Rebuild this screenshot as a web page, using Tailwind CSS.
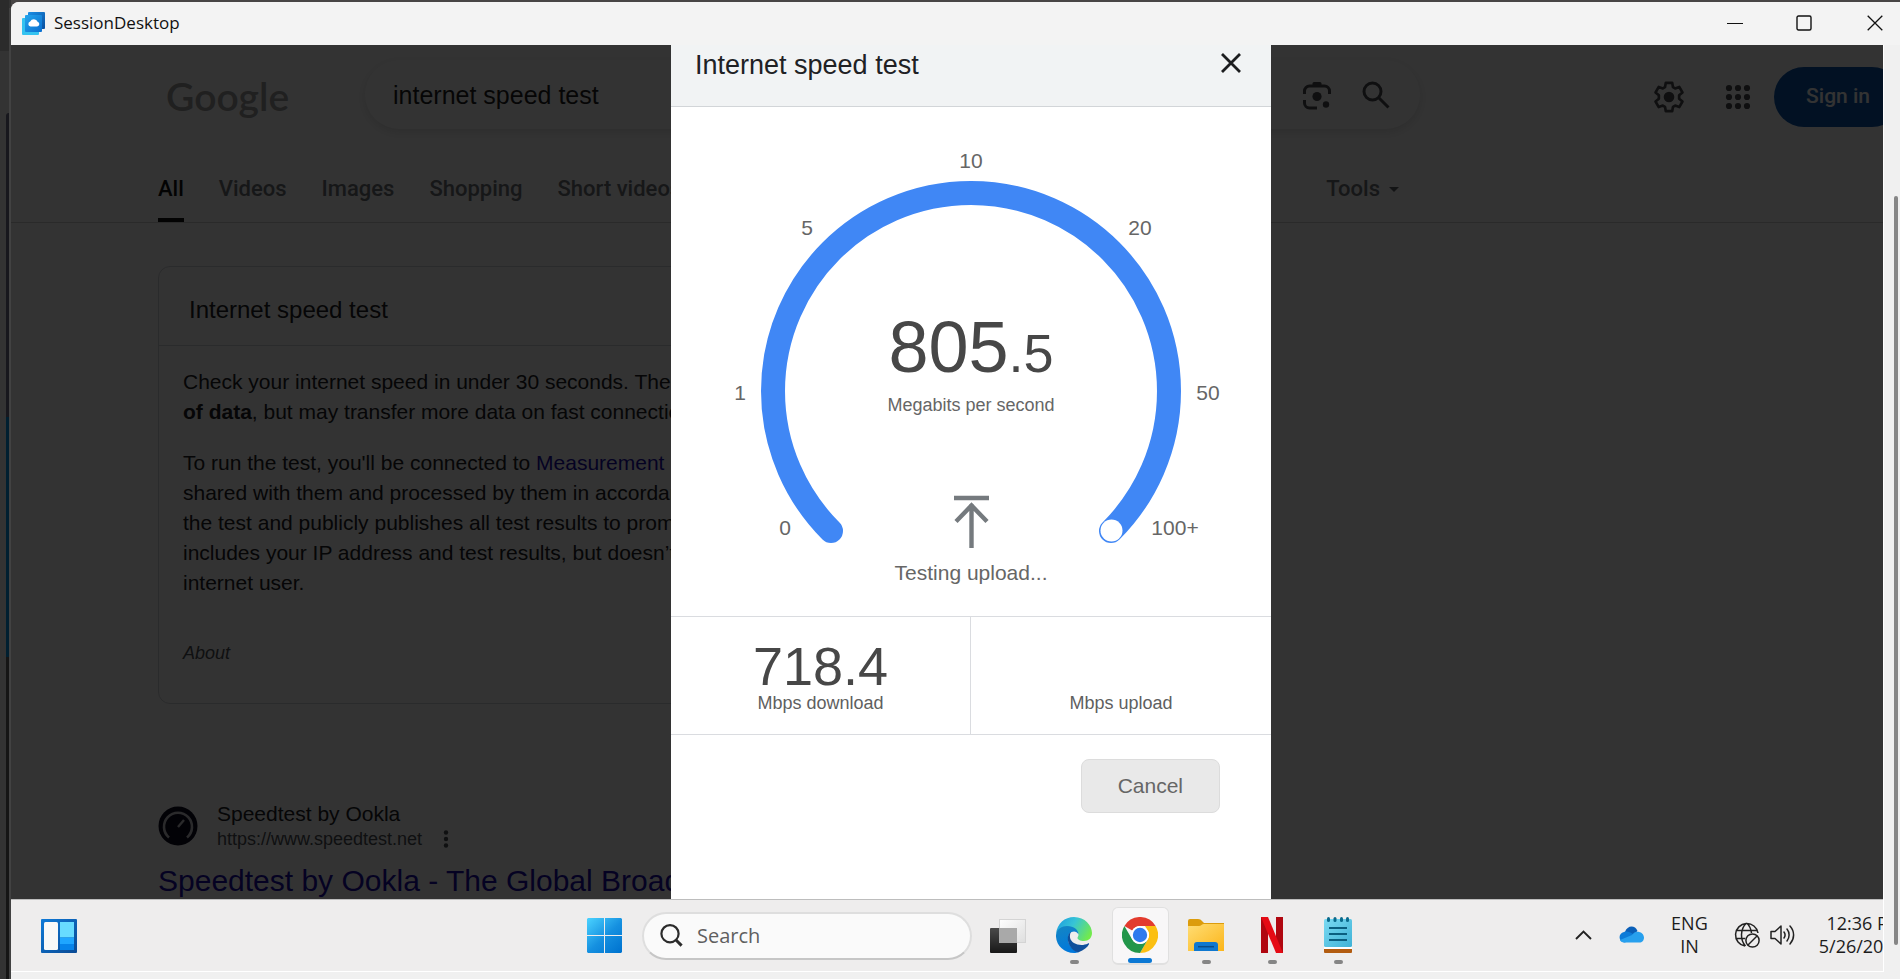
<!DOCTYPE html>
<html lang="en">
<head>
<meta charset="utf-8">
<meta name="viewport" content="width=device-width, initial-scale=1">
<title>SessionDesktop</title>
<script src="https://cdn.jsdelivr.net/npm/@tailwindcss/browser@4"></script>
</head>
<body class="flex h-screen overflow-hidden bg-[#484545] pt-[2px] font-['Liberation_Sans',Arial,sans-serif]">

<!-- Sliver of the windows behind -->
<div class="-mt-[2px] flex w-[11px] shrink-0 bg-[#333]">
  <div class="w-[6px]"><div class="h-[51px] w-[9px] bg-[#2b2b2b]"></div></div>
  <div class="flex w-[3px] flex-col pt-[113px]">
    <div class="h-[304px] rounded-tl bg-[#17171d]"></div>
    <div class="h-[240px] bg-[#001f30]"></div>
    <div class="flex-1 bg-[#151515]"></div>
  </div>
  <div class="mt-2 w-[2px] bg-[#424242]"></div>
</div>

<div class="flex min-w-0 flex-1 flex-col overflow-hidden rounded-tl-lg bg-[#f0f0f0]">

  <!-- Window title bar -->
  <header class="flex h-[43px] shrink-0 items-center bg-[#f3f3f3] pr-[4px] pb-[2px] pl-[11px] font-['Open_Sans','Noto_Sans',sans-serif]">
    <svg class="h-[24px] w-[24px]" viewBox="0 0 24 24" aria-hidden="true">
      <defs>
        <linearGradient id="sd1" x1="0" y1="0" x2="1" y2="1"><stop offset="0" stop-color="#1b8fe6"/><stop offset="1" stop-color="#0a4f9e"/></linearGradient>
        <linearGradient id="sd2" x1="0" y1="0" x2="1" y2="1"><stop offset="0" stop-color="#25a5ec"/><stop offset="1" stop-color="#0a6fd0"/></linearGradient>
      </defs>
      <rect x="6" y="1" width="17" height="17" rx="1" fill="url(#sd1)"/>
      <rect x="0" y="7" width="17" height="17" rx="1" fill="#35c3f0"/>
      <rect x="3" y="4" width="17" height="17" rx="1" fill="url(#sd2)"/>
      <path d="M8.500 15.500h6.600a2.400 2.400 0 0 0 .5-4.700 4 4 0 0 0-7.400-.2 2.500 2.500 0 0 0 .3 4.900z" fill="#fff"/>
    </svg>
    <h1 class="ml-2 text-[17px] leading-6 text-[#111]">SessionDesktop</h1>
    <div class="ml-auto flex h-full">
      <button aria-label="Minimize" class="flex w-[69px] items-center justify-center"><svg class="h-4 w-4" viewBox="0 0 16 16"><path d="M0 8.500h16" stroke="#111"/></svg></button>
      <button aria-label="Maximize" class="flex w-[69px] items-center justify-center"><svg class="h-4 w-4" viewBox="0 0 16 16"><rect x="1" y="1" width="14" height="14" rx="1.500" fill="none" stroke="#111" stroke-width="1.400"/></svg></button>
      <button aria-label="Close" class="flex w-[58px] items-center justify-center pl-4"><svg class="h-4 w-4" viewBox="0 0 16 16"><path d="M.7.7l14.600 14.600M15.300.7L.7 15.300" stroke="#111" stroke-width="1.300"/></svg></button>
    </div>
  </header>

  <div class="flex min-h-0 flex-1">
    <!-- Remote session, wider than its window -->
    <div class="mb-[7px] flex min-w-0 flex-1 flex-col overflow-hidden border-r border-b border-white">
      <main class="relative min-h-0 w-[calc(100%+48px)] flex-1 overflow-hidden bg-white">

        <!-- Search results page -->
        <div class="flex items-center pt-[15px]">
          <a href="#" class="w-[354px] shrink-0 pt-[2px] pl-[155px] font-['Lato',sans-serif] text-[39px] leading-[60px] font-semibold text-[#a0a0a0]">Google</a>
          <form class="flex h-[69px] w-[1055px] shrink-0 items-center rounded-full bg-white pr-[30px] pl-[28px] shadow-[0_3px_10px_1px_rgba(32,33,36,0.12)]">
            <input aria-label="Search" value="internet speed test" class="min-w-0 flex-1 bg-transparent text-[25px] leading-[30px] text-[#1f1f1f] outline-none">
            <button type="button" aria-label="Search by image" class="mr-[30px]">
              <svg class="h-[30px] w-[30px]" viewBox="0 0 30 30" fill="none" stroke="#4a4d51" stroke-width="3">
                <path d="M2.500 14V11a5 5 0 0 1 5-5h15a5 5 0 0 1 5 5v3M2.500 20v3a5 5 0 0 0 5 5H15"/><path d="M10.500 6V3.500a1.500 1.500 0 0 1 1.500-1.500h6a1.500 1.500 0 0 1 1.500 1.500V6z" fill="#4a4d51" stroke="none"/><circle cx="15" cy="16.500" r="4.600" fill="#4a4d51" stroke="none"/><circle cx="24" cy="24.500" r="3.200" fill="#4a4d51" stroke="none"/>
              </svg>
            </button>
            <button type="button" aria-label="Search">
              <svg class="h-[28px] w-[28px]" viewBox="0 0 28 28" fill="none" stroke="#4a4d51" stroke-width="3"><circle cx="10.500" cy="10.500" r="8.500"/><path d="M16.500 16.500L26.500 26.500"/></svg>
            </button>
          </form>
          <div class="mr-[29px] ml-auto flex items-center pt-[4px]">
            <button aria-label="Settings" class="mr-[40px]">
              <svg class="h-[32px] w-[32px]" viewBox="0 0 24 24"><path d="M9.600 1.400h4.800l.6 3.200 1.600.95 3.100-1.100 2.400 4.150-2.500 2.100v2.600l2.500 2.100-2.400 4.150-3.100-1.100-1.600.95-.6 3.200H9.600L9 19.400l-1.600-.95-3.100 1.100L1.900 15.400l2.500-2.100v-2.600L1.900 8.600l2.400-4.150 3.100 1.100L9 4.600z" fill="none" stroke="#4a4d51" stroke-width="2" stroke-linejoin="round"/><circle cx="12" cy="12" r="4" fill="#4a4d51"/></svg>
            </button>
            <button aria-label="Google apps" class="mr-[23px]">
              <svg class="h-[26px] w-[26px]" viewBox="0 0 26 26" fill="#4a4d51"><circle cx="4" cy="4" r="3.100"/><circle cx="13" cy="4" r="3.100"/><circle cx="22" cy="4" r="3.100"/><circle cx="4" cy="13" r="3.100"/><circle cx="13" cy="13" r="3.100"/><circle cx="22" cy="13" r="3.100"/><circle cx="4" cy="22" r="3.100"/><circle cx="13" cy="22" r="3.100"/><circle cx="22" cy="22" r="3.100"/></svg>
            </button>
            <a href="#" class="flex h-[60px] items-center rounded-full bg-[#0b57b0] px-8 font-['Roboto',sans-serif] text-[21px] font-medium text-white">Sign in</a>
          </div>
        </div>

        <div class="border-b border-[#d2d2d2] pl-[147px] font-['Roboto',sans-serif] text-[22px] leading-[30px] font-medium text-[#6f7378]">
          <nav class="flex h-[93px] w-[1241px] items-end gap-[35px] whitespace-nowrap">
            <a href="#" class="border-b-4 border-[#111] pb-[14px] text-[#111]">All</a>
            <a href="#" class="pb-[18px]">Videos</a>
            <a href="#" class="pb-[18px]">Images</a>
            <a href="#" class="pb-[18px]">Shopping</a>
            <a href="#" class="pb-[18px]">Short videos</a>
            <button class="ml-auto flex items-center gap-[9px] pb-[18px]">Tools
              <svg class="h-[5px] w-[10px]" viewBox="0 0 10 5"><path d="M0 0h10L5 5z" fill="#5f6368"/></svg>
            </button>
          </nav>
        </div>

        <div class="w-[1125px] pt-[43px] pl-[147px] whitespace-nowrap text-[#202124]">
          <section class="overflow-hidden rounded-xl border border-[#d2d5da]">
            <h2 class="border-b border-[#d2d5da] pt-[28px] pb-[20px] pl-[30px] text-[24px] leading-[30px]">Internet speed test</h2>
            <div class="pt-[21px] pb-[35px] pl-[24px] text-[21px] leading-[30px]">
              <p>Check your internet speed in under 30 seconds. The<br><b>of data</b>, but may transfer more data on fast connections</p>
              <p class="mt-[21px]">To run the test, you'll be connected to <a href="#" class="text-[#1a0dab]">Measurement</a><br>shared with them and processed by them in accordance<br>the test and publicly publishes all test results to promote<br>includes your IP address and test results, but doesn’t<br>internet user.</p>
              <p class="mt-[40px] text-[18px] text-[#4d5156] italic"><a href="#">About</a></p>
            </div>
          </section>

          <article class="mt-[96px]">
            <div class="flex items-center">
              <svg class="h-[40px] w-[40px]" viewBox="0 0 40 40" aria-hidden="true"><circle cx="20" cy="20" r="19.500" fill="#0c0a20"/><path d="M11 31.500a14 14 0 1 1 18 0" fill="none" stroke="#d0d0d8" stroke-width="2.600"/><path d="M20 21l6-7" stroke="#d0d0d8" stroke-width="2.400"/></svg>
              <div class="ml-[19px]">
                <p class="text-[21px] leading-[27px]">Speedtest by Ookla</p>
                <div class="flex items-center gap-[21px] text-[18px] leading-[24px] text-[#4d5156]">
                  <cite class="not-italic">https://www.speedtest.net</cite>
                  <button aria-label="About this result"><svg class="h-[18px] w-[6px]" viewBox="0 0 6 18" fill="#4d5156"><circle cx="3" cy="2.500" r="2.200"/><circle cx="3" cy="9" r="2.200"/><circle cx="3" cy="15.500" r="2.200"/></svg></button>
                </div>
              </div>
            </div>
            <h3 class="mt-[10px] text-[30px] leading-[39px]"><a href="#" class="text-[#1a0dab]">Speedtest by Ookla - The Global Broadband</a></h3>
          </article>
        </div>

        <!-- Scrim and dialog lie over the page -->
        <div class="absolute inset-0 flex justify-center bg-black/80">
          <div role="dialog" aria-labelledby="dlg-title" class="flex w-[600px] flex-col bg-white text-[#5f5f5f]">
            <div class="flex h-[62px] shrink-0 items-start justify-between border-b border-[#d2d5d8] bg-[#f1f3f4] pr-[30px] pl-[24px]">
              <h2 id="dlg-title" class="pt-[5px] text-[27px] leading-[30px] text-[#202124]">Internet speed test</h2>
              <button aria-label="Close dialog" class="pt-2"><svg class="h-5 w-5" viewBox="0 0 20 20"><path d="M1 1l18 18M19 1L1 19" stroke="#1c1d1f" stroke-width="2.800"/></svg></button>
            </div>
            <svg class="h-[509px] w-full shrink-0" viewBox="0 0 600 509" role="img" aria-label="Speed gauge" font-size="21" text-anchor="middle" fill="#666">
              <path d="M160 424A198 198 0 1 1 440 424" fill="none" stroke="#4087f5" stroke-width="24" stroke-linecap="round"/>
              <circle cx="440.500" cy="423.500" r="11" fill="#fff"/>
              <text x="300" y="61">10</text><text x="136" y="128">5</text><text x="469" y="128">20</text>
              <text x="69" y="293">1</text><text x="537" y="293">50</text><text x="114" y="428">0</text><text x="504" y="428">100+</text>
              <text x="300" y="265" font-size="72" fill="#474747">805<tspan font-size="54">.5</tspan></text>
              <text x="300" y="304" font-size="18">Megabits per second</text>
              <path d="M283 391h35M300.500 441V397M285 414.500L300.500 398.500l15.500 16" fill="none" stroke="#757a7e" stroke-width="4.400"/>
              <text x="300" y="473">Testing upload...</text>
            </svg>
            <div class="grid h-[119px] shrink-0 grid-cols-2 divide-x divide-[#dadce0] border-y border-[#dadce0] text-center text-[18px] leading-[24px]">
              <div class="pt-[20px]"><p class="h-[54px] text-[54px] leading-[58px] text-[#474747]">718.4</p><p>Mbps download</p></div>
              <div class="pt-[74px]"><p>Mbps upload</p></div>
            </div>
            <div class="flex justify-end pt-6 pr-[51px]">
              <button class="h-[54px] rounded-lg border border-[#dcdcdc] bg-[#e9e9e9] px-[36px] text-[21px] text-[#666]">Cancel</button>
            </div>
          </div>
        </div>
      </main>

      <!-- Taskbar -->
      <footer class="grid h-[72px] w-[calc(100%+48px)] shrink-0 grid-cols-[1fr_auto_1fr] items-center border-t border-[#bdbdbd] bg-[#eeeded] font-['Open_Sans','Noto_Sans',sans-serif]">
        <button aria-label="Widgets" class="ml-[30px] w-[36px]">
          <svg class="h-[34px] w-[36px]" viewBox="0 0 36 34"><defs><linearGradient id="wg" x1="0" y1="0" x2="1" y2="1"><stop offset="0" stop-color="#0f7ad8"/><stop offset="1" stop-color="#0a4a94"/></linearGradient></defs><rect width="36" height="34" rx="1" fill="url(#wg)"/><rect x="3" y="3" width="14" height="28" rx="1.500" fill="#f8f8f8"/><path d="M19 3h14v15.500H19z" fill="#68dcff"/><path d="M19 18.500h14V25H19z" fill="#1fa6ff"/><path d="M19 25h14v6H19z" fill="#0784ea"/></svg>
        </button>
        <div class="flex h-[58px] items-center">
          <button aria-label="Start" class="flex w-[66px] justify-center">
            <svg class="h-[35px] w-[35px]" viewBox="0 0 35 35"><defs><linearGradient id="st" gradientUnits="userSpaceOnUse" x1="0" y1="0" x2="32" y2="35"><stop offset="0" stop-color="#4bd3ff"/><stop offset=".55" stop-color="#1590e0"/><stop offset="1" stop-color="#0074d0"/></linearGradient></defs><path d="M1 0h16v17H0V1zM18 0h16l1 1v16H18zM0 18h17v17H1l-1-1zM18 18h17v16l-1 1H18z" fill="url(#st)"/></svg>
          </button>
          <label class="mr-[3px] ml-[5px] flex h-[48px] w-[330px] items-center rounded-full border-2 border-[#dedede] border-b-[#c6c6c6] bg-[#fafafa] pl-4">
            <svg class="h-[23px] w-[23px]" viewBox="0 0 23 23" fill="none" stroke="#2b2b2b"><circle cx="10" cy="9.700" r="8.600" stroke-width="2.200"/><path d="M16 16l5.600 5.600" stroke-width="3"/></svg>
            <input aria-label="Search" placeholder="Search" class="ml-[14px] w-[200px] bg-transparent text-[20px] leading-[28px] outline-none placeholder:text-[#5f5f5f]">
          </label>
          <button aria-label="Task view" class="flex w-[66px] justify-center">
            <svg class="h-[34px] w-[36px]" viewBox="0 0 36 34"><defs><linearGradient id="tv" x1="0" y1="0" x2="0" y2="1"><stop offset="0" stop-color="#4a4a4a"/><stop offset="1" stop-color="#181818"/></linearGradient><linearGradient id="tv2" x1="0" y1="0" x2="1" y2="1"><stop offset="0" stop-color="#fff"/><stop offset="1" stop-color="#dedede"/></linearGradient></defs><rect y="9" width="27" height="25" rx="1" fill="url(#tv)"/><rect x="9.500" y=".5" width="26" height="23" fill="url(#tv2)" stroke="#d4d4d4"/><path d="M9 9h18v15H9z" fill="#a9a9a9"/></svg>
          </button>
          <button aria-label="Microsoft Edge" class="flex h-[58px] w-[66px] flex-col items-center justify-between pt-[10px] pb-[1px]">
            <svg class="h-[36px] w-[36px]" viewBox="0 0 36 36"><defs><linearGradient id="e1" x1="0" y1=".2" x2="1" y2=".6"><stop offset="0" stop-color="#1d9ee0"/><stop offset=".45" stop-color="#37c4d6"/><stop offset="1" stop-color="#72ea4c"/></linearGradient><linearGradient id="e2" x1=".2" y1="0" x2=".5" y2="1"><stop offset="0" stop-color="#1485c4"/><stop offset="1" stop-color="#0078dc"/></linearGradient></defs><path d="M0 17C1 6.500 8.800 0 18 0c11 0 18 8.500 18 16 0 5-3.500 8-8 8-4 0-6.500-1.500-6.500-3 0-1 1-1.700 1-3.500 0-3-3-5.500-7.500-5.500C8 9 3 10 0 17z" fill="url(#e1)"/><path d="M0 18C.5 12 6 9 11 9c7 0 11.500 4 11.500 8.500-1-2-2.700-3-4.500-3-3.500 0-6 3-6 7C12 28 17 34 23 35c-2 .8-3.500 1-5 1C8 36-.5 28 0 18z" fill="url(#e2)"/><path d="M15 14.800c-2.500 1.700-3.500 4.700-3.200 7.700C12.500 29.500 18 35 22.500 35.300 28 33.500 31.500 30 33 27.300c.3-.8-.2-1.300-1-.8-7 3.500-17 .5-18-6-.2-2 .1-4 1-5.700z" fill="#0f4f9c"/></svg>
            <span class="h-[4px] w-[9px] rounded-full bg-[#858585]"></span>
          </button>
          <div class="flex w-[66px] justify-center">
            <button aria-label="Google Chrome" class="flex h-[58px] w-[57px] flex-col items-center justify-between rounded-md border border-b-2 border-[#e0e0e0] bg-[#f8f7f8] pt-[9px]">
              <svg class="h-[36px] w-[36px]" viewBox="0 0 36 36"><path d="M2.400 9A18 18 0 0 1 33.600 9H18a9 9 0 0 0-7.800 4.500z" fill="#e33b2e"/><path d="M33.600 9A18 18 0 0 1 18 36l7.800-13.500A9 9 0 0 0 25.800 13.500L23 9z" fill="#fbbf12"/><path d="M2.400 9A18 18 0 0 0 18 36l7.800-13.500a9 9 0 0 1-15.600 0z" fill="#22964a"/><circle cx="18" cy="18" r="9" fill="#fff"/><circle cx="18" cy="18" r="7.200" fill="#2f7bee"/></svg>
              <span class="h-[5px] w-[24px] rounded-full bg-[#0b78d4]"></span>
            </button>
          </div>
          <button aria-label="File Explorer" class="flex h-[58px] w-[66px] flex-col items-center justify-between pt-[12px] pb-[1px]">
            <svg class="h-[32px] w-[36px]" viewBox="0 0 36 32"><defs><linearGradient id="fx" x1="0" y1="0" x2="1" y2="1"><stop offset="0" stop-color="#ffdd74"/><stop offset="1" stop-color="#fbb51a"/></linearGradient></defs><path d="M0 2a2 2 0 0 1 2-2h8c2 0 3 .7 4 2l2 2h20v10H0z" fill="#dc9c0c"/><path d="M0 7h11c2 0 3-2 5-2h20v27H0z" fill="url(#fx)"/><path d="M6 32v-6a3 3 0 0 1 3-3h18a3 3 0 0 1 3 3v6z" fill="#0f78d0"/><path d="M10 27.700h16" stroke="#0a4c88" stroke-width="1.500"/></svg>
            <span class="h-[4px] w-[9px] rounded-full bg-[#858585]"></span>
          </button>
          <button aria-label="Netflix" class="flex h-[58px] w-[66px] flex-col items-center justify-between pt-[10px] pb-[1px]">
            <svg class="h-[36px] w-[24px]" viewBox="0 0 24 36"><path d="M1 0h7v36H1zM16 0h7v36h-7z" fill="#b00710"/><path d="M1 0h7l15 36h-7z" fill="#e50b15"/></svg>
            <span class="h-[4px] w-[9px] rounded-full bg-[#858585]"></span>
          </button>
          <button aria-label="Notepad" class="flex h-[58px] w-[66px] flex-col items-center justify-between pt-[10px] pb-[1px]">
            <svg class="h-[36px] w-[28px]" viewBox="0 0 28 36"><defs><linearGradient id="np" x1="0" y1="0" x2="1" y2="1"><stop offset="0" stop-color="#7adaf2"/><stop offset="1" stop-color="#3fb2d6"/></linearGradient></defs><path d="M0 29h28v6a1 1 0 0 1-1 1H1a1 1 0 0 1-1-1z" fill="#b25c10"/><path d="M0 28h28v4H0z" fill="#fff"/><rect y="2" width="28" height="28" rx="1.500" fill="url(#np)"/><path d="M5 11h18M5 17h18M5 23h18" stroke="#0a5f80" stroke-width="1.800"/><g fill="#0a6a8c"><rect x="3" width="3" height="5" rx="1.500"/><rect x="9.500" width="3" height="5" rx="1.500"/><rect x="16" width="3" height="5" rx="1.500"/><rect x="22" width="3" height="5" rx="1.500"/></g></svg>
            <span class="h-[4px] w-[9px] rounded-full bg-[#858585]"></span>
          </button>
        </div>
        <div class="flex items-center justify-end pr-[27px] pb-[2px] text-[18px] leading-[23px] text-[#1c1c1c]">
          <button aria-label="Show hidden icons"><svg class="h-[10px] w-[17px]" viewBox="0 0 17 10"><path d="M1 9l7.500-7.500L16 9" fill="none" stroke="#222" stroke-width="1.900"/></svg></button>
          <button aria-label="OneDrive" class="ml-[27px]"><svg class="h-[17px] w-[25px]" viewBox="0 0 25 17"><path d="M6 6C8-.5 16-1.500 18.500 5L13 10z" fill="#0a5fb8"/><path d="M5.500 16.500C-1 16 -1 7 5 6c3-1 6 0 9 2l4 5z" fill="#0c7bd8"/><path d="M13 9c3-5.500 11.500-4 12 2.500 0 3-2 5-4.500 5h-15C3 16.500 1.500 15.500 1 14z" fill="#27a0ee"/></svg></button>
          <button aria-label="Input language" class="ml-[27px] text-center">ENG<br>IN</button>
          <button aria-label="Network" class="ml-[26px]"><svg class="h-[26px] w-[26px]" viewBox="0 0 26 26" fill="none" stroke="#222" stroke-width="1.500"><path d="M24 11A11.300 11.300 0 1 0 11 24M2 8.500h21M1.500 16.500H11M12.500 1C6 7 6 18 11.500 24M12.500 1c3 2.500 4.500 6 5 10"/><circle cx="18.500" cy="18.500" r="6.600"/><path d="M14 23l9-9"/></svg></button>
          <button aria-label="Volume" class="ml-[10px]"><svg class="h-[22px] w-[25px]" viewBox="0 0 25 22" fill="none" stroke="#222" stroke-width="1.500" stroke-linejoin="round"><path d="M1 7.500h4L11 2v18l-6-5.500H1zM14 8c1.300 1.800 1.300 4.200 0 6M17 5c2.800 3.500 2.800 8.500 0 12M20 2c4.800 5.500 4.800 12.500 0 18" stroke-linecap="round"/></svg></button>
          <button aria-label="Clock" class="ml-[24px] text-right whitespace-nowrap">12:36 PM<br>5/26/2025</button>
        </div>
      </footer>
    </div>

    <!-- Window scrollbar -->
    <div class="flex w-[16px] shrink-0 justify-center bg-[#f0f0f0] pt-[151px] pb-[34px] pl-[8px]">
      <div class="w-[4px] rounded-full bg-[#868686]"></div>
    </div>
  </div>
</div>
</body>
</html>
